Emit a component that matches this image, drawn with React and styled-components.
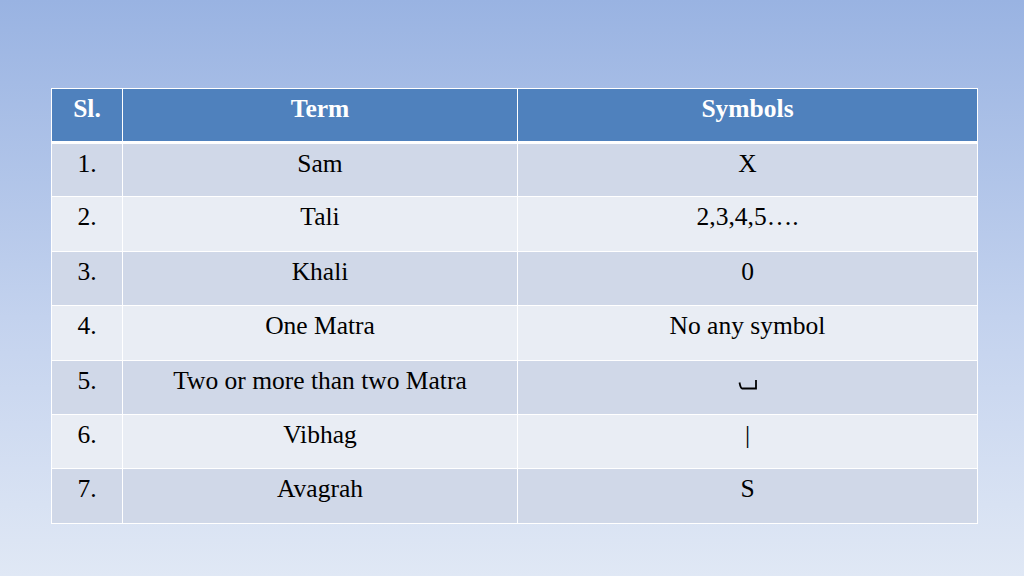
import styled, { createGlobalStyle } from 'styled-components';

const Global = createGlobalStyle`
  html, body {
    margin: 0;
    padding: 0;
  }
  body {
    width: 1024px;
    height: 576px;
    overflow: hidden;
    background: linear-gradient(180deg, #99b3e2 0%, #c3d2ee 55%, #e0e8f5 100%);
    font-family: "Liberation Serif", "DejaVu Serif", serif;
  }
`;

const Slide = styled.div`
  width: 1024px;
  height: 576px;
  box-sizing: border-box;
  padding: 88px 0 0 51px;
`;

const Table = styled.table`
  width: 926px;
  border-collapse: collapse;
  table-layout: fixed;
  border: 1.5px solid #fff;
  font-family: "Liberation Serif", "DejaVu Serif", serif;
  font-size: 25.5px;
`;

const Col = styled.col`
  width: ${(p) => p.$w}px;
`;

const Head = styled.th`
  height: 54px;
  background: #4f81bd;
  color: #fff;
  font-weight: 700;
  text-align: center;
  vertical-align: top;
  padding: 5px 4px 0;
  border: 1.5px solid #fff;
  border-bottom: 3px solid #fff;
  box-sizing: border-box;
  line-height: 1.2;
`;

const Cell = styled.td`
  height: 54.4px;
  background: ${(p) => (p.$odd ? '#d0d8e8' : '#e9edf4')};
  color: #000;
  text-align: center;
  vertical-align: top;
  padding: 5px 4px 0;
  border: 1.5px solid #fff;
  box-sizing: border-box;
  line-height: 1.2;
`;

const GlyphSvg = styled.svg`
  width: 20px;
  height: 12px;
  margin-top: 13px;
`;

const Glyph = () => (
  <GlyphSvg viewBox="0 0 20 12">
    <path d="M1.5 3.5 C2 6 2.5 9 4 9.5 L18 9.5 L18 1" fill="none" stroke="#000" strokeWidth="1.8" />
  </GlyphSvg>
);

const rows = [
  ['1.', 'Sam', 'X'],
  ['2.', 'Tali', '2,3,4,5….'],
  ['3.', 'Khali', '0'],
  ['4.', 'One Matra', 'No any symbol'],
  ['5.', 'Two or more than two Matra', <Glyph key="g" />],
  ['6.', 'Vibhag', '|'],
  ['7.', 'Avagrah', 'S'],
];

export default function App() {
  return (
    <>
      <Global />
      <Slide>
        <Table>
          <colgroup>
            <Col $w={71} />
            <Col $w={395} />
            <Col $w={460} />
          </colgroup>
          <thead>
            <tr>
              <Head>Sl.</Head>
              <Head>Term</Head>
              <Head>Symbols</Head>
            </tr>
          </thead>
          <tbody>
            {rows.map((r, i) => (
              <tr key={i}>
                {r.map((c, j) => (
                  <Cell key={j} $odd={i % 2 === 0}>
                    {c}
                  </Cell>
                ))}
              </tr>
            ))}
          </tbody>
        </Table>
      </Slide>
    </>
  );
}
